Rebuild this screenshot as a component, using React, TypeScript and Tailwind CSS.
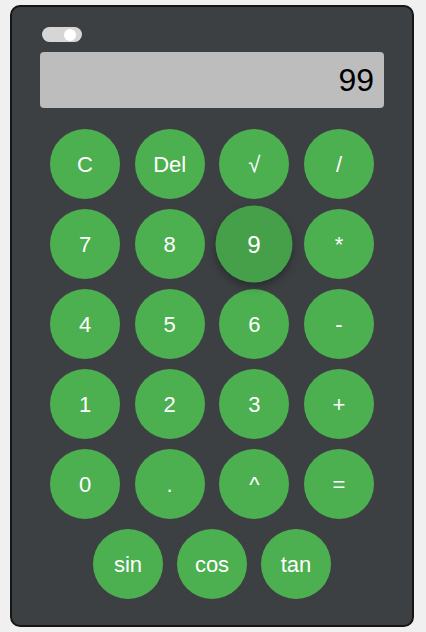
const KEYS = ['C', 'Del', '√', '/', '7', '8', '9', '*', '4', '5', '6', '-', '1', '2', '3', '+', '0', '.', '^', '=']
const TRIG = ['sin', 'cos', 'tan']

function Key({ label, hover = false }: { label: string; hover?: boolean }) {
  return (
    <button
      className={
        hover
          ? 'w-[70px] h-[70px] rounded-full bg-[#46a049] text-white text-[22px] scale-110 shadow-[0_4px_8px_rgba(0,0,0,0.3)]'
          : 'w-[70px] h-[70px] rounded-full bg-[#4caf50] text-white text-[22px]'
      }
    >
      {label}
    </button>
  )
}

export default function App() {
  return (
    <div className="min-h-screen bg-[#f0f0f0] pt-[5px] pl-[10px] font-['Liberation_Sans',Arial,sans-serif]">
      <div className="w-[404px] h-[622px] rounded-[10px] border-2 border-[#151515] bg-[#3c4043] px-[28px] pt-[20px]">
        {/* Theme toggle */}
        <div className="ml-[2px] w-[40px] h-[15px] rounded-full bg-[#d6d6d6] relative">
          <div className="absolute left-[22px] top-[1.5px] w-[12px] h-[12px] rounded-full bg-white" />
        </div>

        {/* Display */}
        <div className="mt-[10px] h-[56px] rounded-[4px] bg-[#bdbdbd] flex items-center justify-end pr-[10px]">
          <span className="text-[32px] text-black leading-none">99</span>
        </div>

        {/* Keypad */}
        <div className="mt-[21px] grid grid-cols-[repeat(4,70px)] gap-x-[14.67px] gap-y-[10px] justify-center">
          {KEYS.map(k => (
            <Key key={k} label={k} hover={k === '9'} />
          ))}
        </div>
        <div className="mt-[10px] flex justify-center gap-[14px]">
          {TRIG.map(k => (
            <Key key={k} label={k} />
          ))}
        </div>
      </div>
    </div>
  )
}
